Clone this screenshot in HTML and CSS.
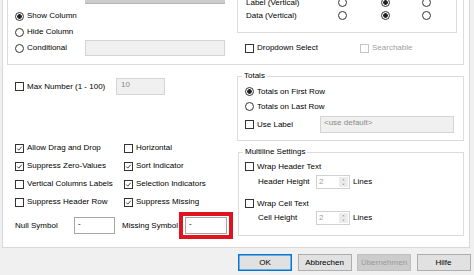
FILE: index.html
```html
<!DOCTYPE html>
<html lang="de">
<head>
    <meta charset="UTF-8">
    <meta name="viewport" content="width=device-width, initial-scale=1.0">
    <title>Eigenschaften</title>
    <link rel="stylesheet" href="styles.css">
</head>
<body>
    <div class="tab">
        <div class="top-panel">
            <div class="top-left">
                <div class="combo-strip"></div>
                <div class="row radio-row"><span class="radio on"></span><span class="lbl">Show Column</span></div>
                <div class="row radio-row"><span class="radio"></span><span class="lbl">Hide Column</span></div>
                <div class="row radio-row"><span class="radio"></span><span class="lbl w-cond">Conditional</span><span class="textbox off cond-box"></span></div>
            </div>
            <div class="top-right">
                <div class="orient-group">
                    <div class="orient-row"><span class="orient-lbl">Label (Vertical)</span><span class="radio"></span><span class="radio on r2"></span><span class="radio r3"></span></div>
                    <div class="orient-row"><span class="orient-lbl">Data (Vertical)</span><span class="radio"></span><span class="radio on r2"></span><span class="radio r3"></span></div>
                </div>
                <div class="row dropdown-row">
                    <span class="check"></span><span class="lbl w-dropdown">Dropdown Select</span>
                    <span class="check off"></span><span class="lbl muted">Searchable</span>
                </div>
            </div>
        </div>

        <div class="main">
            <div class="main-left">
                <div class="row max-row">
                    <span class="check"></span><span class="lbl w-max">Max Number (1 - 100)</span>
                    <span class="textbox off max-box">10</span>
                </div>

                <div class="check-grid">
                    <div class="row"><span class="check on"><svg viewBox="0 0 9 9"><polyline points="1.6,4.6 3.6,6.6 7.4,2.2"/></svg></span><span class="lbl">Allow Drag and Drop</span></div>
                    <div class="row"><span class="check"></span><span class="lbl">Horizontal</span></div>
                    <div class="row"><span class="check on"><svg viewBox="0 0 9 9"><polyline points="1.6,4.6 3.6,6.6 7.4,2.2"/></svg></span><span class="lbl">Suppress Zero-Values</span></div>
                    <div class="row"><span class="check on"><svg viewBox="0 0 9 9"><polyline points="1.6,4.6 3.6,6.6 7.4,2.2"/></svg></span><span class="lbl">Sort Indicator</span></div>
                    <div class="row"><span class="check"></span><span class="lbl">Vertical Columns Labels</span></div>
                    <div class="row"><span class="check on"><svg viewBox="0 0 9 9"><polyline points="1.6,4.6 3.6,6.6 7.4,2.2"/></svg></span><span class="lbl">Selection Indicators</span></div>
                    <div class="row"><span class="check"></span><span class="lbl">Suppress Header Row</span></div>
                    <div class="row"><span class="check on"><svg viewBox="0 0 9 9"><polyline points="1.6,4.6 3.6,6.6 7.4,2.2"/></svg></span><span class="lbl">Suppress Missing</span></div>
                </div>

                <div class="row symbol-row">
                    <span class="w-null">Null Symbol</span>
                    <span class="textbox sym-box">-</span>
                    <span class="w-missing">Missing Symbol</span>
                    <span class="highlight"><span class="textbox sym-box">-</span></span>
                </div>
            </div>

            <div class="main-right">
                <fieldset class="group totals">
                    <legend>Totals</legend>
                    <div class="row opt-row"><span class="radio on"></span><span class="lbl">Totals on First Row</span></div>
                    <div class="row opt-row"><span class="radio"></span><span class="lbl">Totals on Last Row</span></div>
                    <div class="row label-row">
                        <span class="check"></span><span class="lbl w-uselabel">Use Label</span>
                        <span class="textbox off default-box">&lt;use default&gt;</span>
                    </div>
                </fieldset>

                <fieldset class="group multiline">
                    <legend>Multiline Settings</legend>
                    <div class="row opt-row"><span class="check"></span><span class="lbl">Wrap Header Text</span></div>
                    <div class="row height-row">
                        <span class="w-height">Header Height</span>
                        <span class="spin"><span class="spin-val">2</span><span class="spin-btns"><svg viewBox="0 0 8 12"><polygon points="2.5,4 5.5,4 4,2.5"/><polygon points="2.5,8 5.5,8 4,9.5"/></svg></span></span>
                        <span class="lines">Lines</span>
                    </div>
                    <div class="row opt-row cell-row"><span class="check"></span><span class="lbl">Wrap Cell Text</span></div>
                    <div class="row height-row flush">
                        <span class="w-height">Cell Height</span>
                        <span class="spin"><span class="spin-val">2</span><span class="spin-btns"><svg viewBox="0 0 8 12"><polygon points="2.5,4 5.5,4 4,2.5"/><polygon points="2.5,8 5.5,8 4,9.5"/></svg></span></span>
                        <span class="lines">Lines</span>
                    </div>
                </fieldset>
            </div>
        </div>
    </div>

    <div class="buttons">
        <button class="btn default">OK</button>
        <button class="btn">Abbrechen</button>
        <button class="btn" disabled>Übernehmen</button>
        <button class="btn">Hilfe</button>
    </div>
</body>
</html>
```

FILE: styles.css
```css
html, body {
    margin: 0;
    height: 275px;
    overflow: hidden;
}
body {
    background: #f0f0f0;
    font-family: "Liberation Sans", Arial, sans-serif;
    font-size: 8px;
    line-height: 10px;
    color: #000;
}
.tab {
    width: 468px;
    height: 248px;
    margin-left: 2px;
    background: #fff;
    border: 1px solid #d9d9d9;
    border-top: 0;
    box-sizing: border-box;
}

/* shared controls */
.row {
    display: flex;
    align-items: center;
    white-space: nowrap;
}
.radio, .check {
    flex: none;
    width: 9px;
    height: 9px;
    box-sizing: border-box;
    border: 1px solid #333;
    background: #fff;
    margin-right: 3px;
}
.radio {
    border-radius: 50%;
}
.radio.on {
    background: radial-gradient(circle, #222 0 2px, #fff 2.6px);
}
.check svg {
    display: block;
    width: 7px;
    height: 7px;
    fill: none;
    stroke: #222;
    stroke-width: 1.1;
}
.check.off {
    border-color: #c4c4c4;
}
.muted {
    color: #a0a0a0;
}
.textbox {
    flex: none;
    display: block;
    box-sizing: border-box;
    border: 1px solid #a6a6a6;
    background: #fff;
    padding: 1px 3px;
}
.textbox.off {
    background: #f0f0f0;
    border-color: #d4d4d4;
    color: #8a8a8a;
}

/* top panel */
.top-panel {
    display: flex;
    width: 457px;
    height: 65px;
    margin-left: 4px;
    border: 1px solid #dcdcdc;
    border-top: 0;
    box-sizing: border-box;
}
.top-left {
    width: 228px;
}
.combo-strip {
    width: 140px;
    height: 4px;
    margin-left: 77px;
    background: #cccccc;
    border-bottom: 1px solid #b4b4b4;
    box-sizing: border-box;
}
.radio-row {
    height: 16px;
    padding-left: 7px;
}
.combo-strip + .radio-row {
    margin-top: 4px;
}
.w-cond {
    width: 58px;
}
.cond-box {
    width: 140px;
    height: 16px;
}
.top-right {
    width: 226px;
}
.orient-group {
    width: 220px;
    height: 37px;
    margin: -4px 0 0 1px;
    border: 1px solid #dcdcdc;
    border-top: 0;
    box-sizing: border-box;
}
.orient-row {
    display: flex;
    align-items: center;
    height: 13px;
    padding-left: 8px;
}
.orient-lbl {
    width: 92px;
}
.orient-row .radio {
    margin-right: 0;
}
.orient-row .r2 {
    margin-left: 34px;
}
.orient-row .r3 {
    margin-left: 32px;
}
.dropdown-row {
    height: 16px;
    margin-top: 7px;
    padding-left: 9px;
}
.w-dropdown {
    width: 100px;
    margin-right: 3px;
}

/* lower area */
.main {
    display: flex;
}
.main-left {
    width: 234px;
}
.max-row {
    height: 17px;
    margin-top: 13px;
    padding-left: 12px;
}
.w-max {
    width: 89px;
}
.max-box {
    width: 49px;
    height: 17px;
    padding-left: 4px;
}
.check-grid {
    display: grid;
    grid-template-columns: 109px auto;
    grid-auto-rows: 18px;
    margin-top: 44px;
    padding-left: 12px;
}
.symbol-row {
    height: 27px;
    margin-top: 1px;
    padding-left: 12px;
}
.w-null {
    width: 59px;
}
.sym-box {
    width: 41px;
    height: 17px;
    line-height: 8px;
    padding: 2px 3px;
}
.w-missing {
    width: 57px;
    margin-left: 7px;
}
.highlight {
    display: block;
    border: 4px solid #e0141e;
    padding: 1px 2px;
}
.highlight .sym-box {
    width: 42px;
}

.main-right {
    width: 227px;
}
.group {
    min-width: 0;
    margin: 6px 0 0;
    padding: 0;
    border: 1px solid #dcdcdc;
    box-sizing: border-box;
}
.group legend {
    margin-left: 4px;
    padding: 0 2px;
    line-height: 10px;
}
.totals {
    width: 227px;
    padding: 3px 0 7px;
}
.opt-row {
    height: 15px;
    padding-left: 7px;
}
.label-row {
    height: 17px;
    margin-top: 2px;
    padding-left: 7px;
}
.w-uselabel {
    width: 63px;
}
.default-box {
    width: 134px;
    height: 17px;
    color: #a8a8a8;
}
.multiline {
    width: 226px;
    margin-left: 1px;
    padding: 2px 0 10px;
}
.multiline .opt-row {
    padding-left: 6px;
}
.height-row {
    height: 14px;
    margin-top: 1px;
    padding-left: 19px;
}
.height-row.flush {
    margin-top: 0;
}
.cell-row {
    margin-top: 7px;
}
.w-height {
    width: 58px;
}
.spin {
    display: flex;
    width: 34px;
    height: 14px;
    box-sizing: border-box;
    border: 1px solid #d0d0d0;
    background: #fff;
}
.spin-val {
    flex: 1;
    padding-left: 2px;
    line-height: 12px;
    color: #9a9a9a;
}
.spin-btns {
    width: 9px;
    margin: 1px 1px 1px 0;
    background: #ececec;
}
.spin-btns svg {
    display: block;
    width: 9px;
    height: 10px;
    fill: #8a8a8a;
}
.lines {
    margin-left: 3px;
}

/* dialog buttons */
.buttons {
    display: flex;
    gap: 5.5px;
    margin-top: 6px;
    padding-left: 238px;
}
.btn {
    width: 54px;
    height: 17px;
    padding: 0;
    font: inherit;
    color: #000;
    background: #e1e1e1;
    border: 1px solid #adadad;
}
.btn.default {
    border-color: #0078d7;
    box-shadow: inset 0 0 0 0.5px #0078d7;
}
.btn:disabled {
    background: #cccccc;
    border-color: #bfbfbf;
    color: #9a9a9a;
}
```
